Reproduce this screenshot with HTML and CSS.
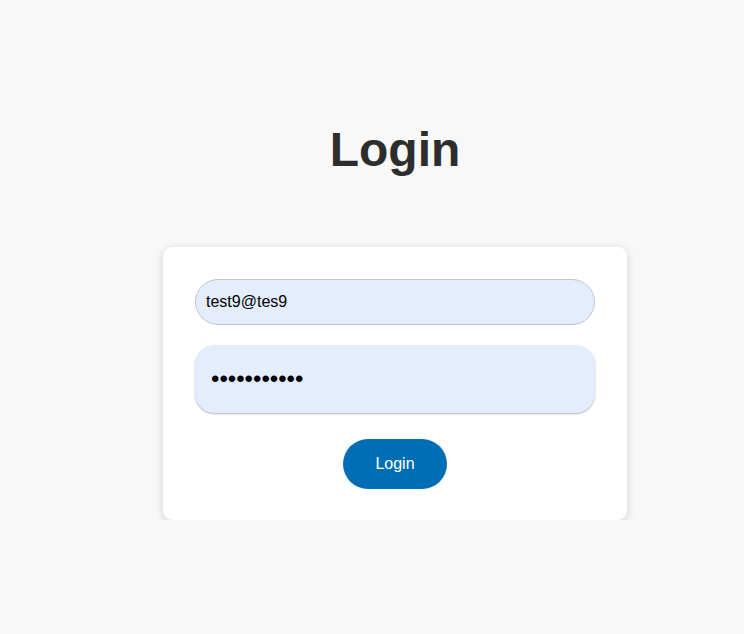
FILE: index.html
```html
<!DOCTYPE html>
<html lang="en">
<head>
<meta charset="utf-8">
<title>Login</title>
<link rel="stylesheet" href="styles.css">
</head>
<body>
<main class="page">
  <h1 class="title">Login</h1>
  <form class="card">
    <input class="field field-email" type="text" value="test9@tes9">
    <input class="field field-password" type="password" value="abcdefghijk">
    <button class="btn" type="button">Login</button>
  </form>
</main>
</body>
</html>
```
FILE: styles.css
```css
html, body {
  margin: 0;
  padding: 0;
  background: #f8f8f8;
  font-family: "Liberation Sans", Arial, sans-serif;
}
.page {
  width: 464px;
  margin-left: 163px;
  padding-top: 122px;
  display: flex;
  flex-direction: column;
}
.title {
  margin: 0;
  font-size: 48px;
  line-height: 55px;
  font-weight: 700;
  color: #2d2d2d;
  text-align: center;
}
.card {
  margin-top: 70px;
  background: #ffffff;
  border-radius: 9px;
  box-shadow: 0 2px 10px rgba(0, 0, 0, 0.16);
  padding: 32px 32px 31px;
  display: flex;
  flex-direction: column;
  align-items: center;
}
.field {
  box-sizing: border-box;
  width: 400px;
  margin: 0;
  background: #e4edfc;
  color: #000;
  font-family: "Liberation Sans", Arial, sans-serif;
  font-size: 16px;
  outline: none;
}
.field-email {
  height: 46px;
  border: 1px solid #c2c6cc;
  border-radius: 23px;
  padding: 0 10px;
}
.field-password {
  height: 68px;
  margin-top: 20px;
  border: none;
  border-radius: 20px;
  padding: 0 16px;
  box-shadow: 0 1px 2px rgba(0, 0, 0, 0.3);
  font-size: 24px;
}
.btn {
  margin-top: 26px;
  width: 104px;
  height: 50px;
  border: none;
  border-radius: 25px;
  background: #006eb4;
  color: #ffffff;
  font-family: "Liberation Sans", Arial, sans-serif;
  font-size: 16px;
  cursor: pointer;
}
```
